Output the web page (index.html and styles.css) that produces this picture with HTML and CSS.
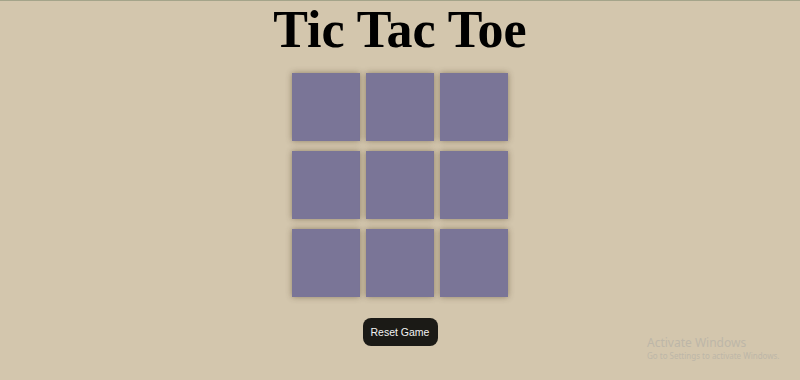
FILE: index.html
```html
<!DOCTYPE html>
<html>
<head>
<meta charset="utf-8">
<title>Tic Tac Toe</title>
<link rel="stylesheet" href="styles.css">
</head>
<body>
<main class="game">
  <h1 class="title">Tic Tac Toe</h1>
  <div class="board">
    <div class="cell"></div>
    <div class="cell"></div>
    <div class="cell"></div>
    <div class="cell"></div>
    <div class="cell"></div>
    <div class="cell"></div>
    <div class="cell"></div>
    <div class="cell"></div>
    <div class="cell"></div>
  </div>
  <button class="reset">Reset Game</button>
</main>
<div class="watermark">
  <div class="wm-title">Activate Windows</div>
  <div class="wm-sub">Go to Settings to activate Windows.</div>
</div>
</body>
</html>
```
FILE: styles.css
```css
html, body {
  margin: 0;
  padding: 0;
}
body {
  background: #d3c6ad;
  border-top: 1px solid #a4a48a;
  height: 379px;
  overflow: hidden;
  font-family: "Liberation Sans", Arial, sans-serif;
}
.game {
  display: flex;
  flex-direction: column;
  align-items: center;
}
.title {
  font-family: "Liberation Serif", "Times New Roman", serif;
  font-weight: bold;
  font-size: 52px;
  line-height: 55px;
  margin: 1px 0 16px 0;
  color: #000;
}
.board {
  display: grid;
  grid-template-columns: repeat(3, 68px);
  grid-auto-rows: 68px;
  column-gap: 6px;
  row-gap: 10px;
}
.cell {
  background: #7a7597;
  box-shadow: 0 0 6px rgba(60, 45, 20, 0.45);
}
.reset {
  margin-top: 21px;
  width: 75px;
  height: 28px;
  border: none;
  border-radius: 8px;
  background: #1b1a16;
  color: #f2f2f2;
  font-family: "Liberation Sans", Arial, sans-serif;
  font-size: 10.5px;
  padding: 0;
  cursor: pointer;
}
.watermark {
  position: absolute;
  left: 647px;
  top: 335px;
  color: #bdb6a8;
  font-family: "Noto Sans", "Liberation Sans", sans-serif;
}
.wm-title {
  font-size: 12px;
  line-height: 15px;
}
.wm-sub {
  font-size: 8px;
  line-height: 12px;
}
```
